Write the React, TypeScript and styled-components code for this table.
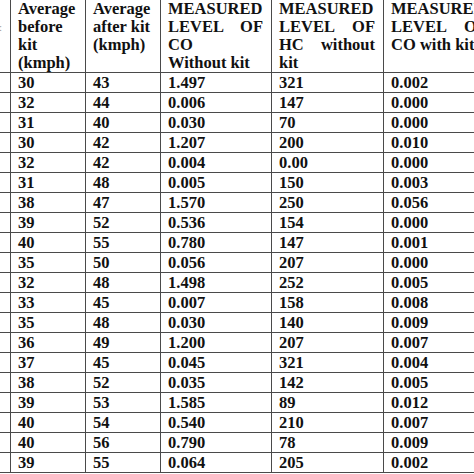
import React from 'react';
import styled, { createGlobalStyle } from 'styled-components';

const GlobalStyle = createGlobalStyle`
  html, body {
    margin: 0;
    padding: 0;
    background: #ffffff;
  }
  body {
    font-family: "Liberation Serif", "Times New Roman", serif;
  }
`;

const Frame = styled.div`
  width: 474px;
  height: 474px;
  overflow: hidden;
  background: #ffffff;
`;

const Table = styled.table`
  margin-left: -50px;
  border-collapse: collapse;
  border-spacing: 0;
  table-layout: fixed;
  width: 545px;
  color: #111111;
  font-family: "Liberation Serif", "Times New Roman", serif;
  font-weight: 700;
  font-size: 16.5px;
`;

const Col = styled.col<{ $width: number }>`
  width: ${({ $width }) => $width}px;
`;

const HeadCell = styled.th`
  height: 71px;
  padding: 0 8px 0 7px;
  vertical-align: top;
  text-align: left;
  font-weight: 700;
  line-height: 18px;
  border-left: 1px solid #4a4a4a;
  border-right: 1px solid #4a4a4a;
  border-bottom: 1px solid #4a4a4a;
  overflow: hidden;
`;

const HeadLine = styled.span<{ $justify?: boolean }>`
  display: block;
  white-space: nowrap;
  text-align: ${({ $justify }) => ($justify ? 'justify' : 'left')};
  text-align-last: ${({ $justify }) => ($justify ? 'justify' : 'left')};
`;

const Cell = styled.td`
  height: 19px;
  padding: 0 8px 0 7px;
  line-height: 18px;
  vertical-align: middle;
  border: 1px solid #4a4a4a;
  white-space: nowrap;
`;

const FirstHead = styled(HeadCell)`
  position: relative;
`;

const Residue = styled.span`
  position: absolute;
  right: 8px;
  top: 18px;
  color: #9a9a9a;
  font-size: 11px;
  font-weight: 400;
`;

type Line = { text: string; justify?: boolean };

const widths = [60, 75, 75, 111, 112, 112];

const headers: Line[][] = [
  [{ text: 'Average' }, { text: 'before' }, { text: 'kit' }, { text: '(kmph)' }],
  [{ text: 'Average' }, { text: 'after kit' }, { text: '(kmph)' }],
  [{ text: 'MEASURED' }, { text: 'LEVEL OF', justify: true }, { text: 'CO' }, { text: 'Without kit' }],
  [
    { text: 'MEASURED' },
    { text: 'LEVEL OF', justify: true },
    { text: 'HC without', justify: true },
    { text: 'kit' },
  ],
  [{ text: 'MEASURED' }, { text: 'LEVEL OF', justify: true }, { text: 'CO with kit' }],
];

const rows: string[][] = [
  ['30', '43', '1.497', '321', '0.002'],
  ['32', '44', '0.006', '147', '0.000'],
  ['31', '40', '0.030', '70', '0.000'],
  ['30', '42', '1.207', '200', '0.010'],
  ['32', '42', '0.004', '0.00', '0.000'],
  ['31', '48', '0.005', '150', '0.003'],
  ['38', '47', '1.570', '250', '0.056'],
  ['39', '52', '0.536', '154', '0.000'],
  ['40', '55', '0.780', '147', '0.001'],
  ['35', '50', '0.056', '207', '0.000'],
  ['32', '48', '1.498', '252', '0.005'],
  ['33', '45', '0.007', '158', '0.008'],
  ['35', '48', '0.030', '140', '0.009'],
  ['36', '49', '1.200', '207', '0.007'],
  ['37', '45', '0.045', '321', '0.004'],
  ['38', '52', '0.035', '142', '0.005'],
  ['39', '53', '1.585', '89', '0.012'],
  ['40', '54', '0.540', '210', '0.007'],
  ['40', '56', '0.790', '78', '0.009'],
  ['39', '55', '0.064', '205', '0.002'],
];

export default function App() {
  return (
    <Frame>
      <GlobalStyle />
      <Table>
        <colgroup>
          {widths.map((w, i) => (
            <Col key={i} $width={w} />
          ))}
        </colgroup>
        <thead>
          <tr>
            <FirstHead>
              <Residue>:</Residue>
            </FirstHead>
            {headers.map((lines, i) => (
              <HeadCell key={i}>
                {lines.map((l, j) => (
                  <HeadLine key={j} $justify={l.justify}>
                    {l.text}
                  </HeadLine>
                ))}
              </HeadCell>
            ))}
          </tr>
        </thead>
        <tbody>
          {rows.map((r, i) => (
            <tr key={i}>
              <Cell />
              {r.map((v, j) => (
                <Cell key={j}>{v}</Cell>
              ))}
            </tr>
          ))}
        </tbody>
      </Table>
    </Frame>
  );
}
